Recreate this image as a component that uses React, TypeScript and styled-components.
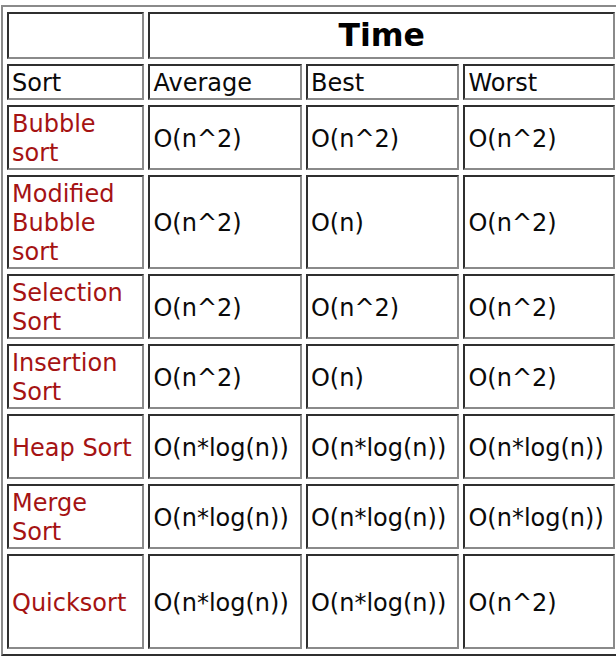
import React from "react";
import styled, { createGlobalStyle } from "styled-components";

const Global = createGlobalStyle`
  html, body {
    margin: 0;
    padding: 0;
    background: #ffffff;
    overflow: hidden;
  }
  body {
    font-family: "DejaVu Sans", Verdana, sans-serif;
  }
`;

const Table = styled.table`
  margin: 5px 0 0 1px;
  border-style: solid;
  border-width: 2px;
  border-color: #8a8a8a #2f2f2f #2f2f2f #8a8a8a;
  border-collapse: separate;
  border-spacing: 4px 5px;
  table-layout: fixed;
  width: 620px;
  font-family: "DejaVu Sans", Verdana, sans-serif;
  font-size: 24px;
  line-height: 29px;
  color: #0a0a0a;
`;

const Row = styled.tr<{ $h: number }>`
  height: ${(p) => p.$h}px;
`;

const Cell = styled.td<{ $sort?: boolean }>`
  box-sizing: border-box;
  border-style: solid;
  border-width: 2px;
  border-color: #2f2f2f #8a8a8a #8a8a8a #2f2f2f;
  padding: 3px 0 0 3px;
  vertical-align: middle;
  text-align: left;
  white-space: nowrap;
  overflow: hidden;
  color: ${(p) => (p.$sort ? "#a51313" : "#0a0a0a")};
`;

const TitleCell = styled(Cell)`
  text-align: center;
  font-weight: bold;
  font-size: 31.5px;
  color: #000000;
  padding: 0;
`;

type Algo = {
  name: string[];
  avg: string;
  best: string;
  worst: string;
  h: number;
};

const algos: Algo[] = [
  { name: ["Bubble", "sort"], avg: "O(n^2)", best: "O(n^2)", worst: "O(n^2)", h: 65 },
  { name: ["Modified", "Bubble", "sort"], avg: "O(n^2)", best: "O(n)", worst: "O(n^2)", h: 94 },
  { name: ["Selection", "Sort"], avg: "O(n^2)", best: "O(n^2)", worst: "O(n^2)", h: 65 },
  { name: ["Insertion", "Sort"], avg: "O(n^2)", best: "O(n)", worst: "O(n^2)", h: 65 },
  { name: ["Heap Sort"], avg: "O(n*log(n))", best: "O(n*log(n))", worst: "O(n*log(n))", h: 65 },
  { name: ["Merge", "Sort"], avg: "O(n*log(n))", best: "O(n*log(n))", worst: "O(n*log(n))", h: 65 },
  { name: ["Quicksort"], avg: "O(n*log(n))", best: "O(n*log(n))", worst: "O(n^2)", h: 95 },
];

export default function App() {
  return (
    <>
      <Global />
      <Table>
        <colgroup>
          <col style={{ width: 137 }} />
          <col style={{ width: 153 }} />
          <col style={{ width: 153 }} />
          <col style={{ width: 151 }} />
        </colgroup>
        <tbody>
          <Row $h={47}>
            <Cell />
            <TitleCell colSpan={3}>Time</TitleCell>
          </Row>
          <Row $h={35}>
            <Cell>Sort</Cell>
            <Cell>Average</Cell>
            <Cell>Best</Cell>
            <Cell>Worst</Cell>
          </Row>
          {algos.map((a) => (
            <Row key={a.name.join(" ")} $h={a.h}>
              <Cell $sort>
                {a.name.map((line, i) => (
                  <React.Fragment key={i}>
                    {i > 0 && <br />}
                    {line}
                  </React.Fragment>
                ))}
              </Cell>
              <Cell>{a.avg}</Cell>
              <Cell>{a.best}</Cell>
              <Cell>{a.worst}</Cell>
            </Row>
          ))}
        </tbody>
      </Table>
    </>
  );
}
